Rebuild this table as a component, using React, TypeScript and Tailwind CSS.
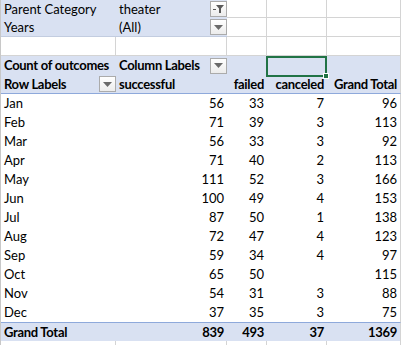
import React from 'react';

// Pivot data rows
const rows = [
  ['Jan', 56, 33, 7, 96],
  ['Feb', 71, 39, 3, 113],
  ['Mar', 56, 33, 3, 92],
  ['Apr', 71, 40, 2, 113],
  ['May', 111, 52, 3, 166],
  ['Jun', 100, 49, 4, 153],
  ['Jul', 87, 50, 1, 138],
  ['Aug', 72, 47, 4, 123],
  ['Sep', 59, 34, 4, 97],
  ['Oct', 65, 50, '', 115],
  ['Nov', 54, 31, 3, 88],
  ['Dec', 37, 35, 3, 75],
];

function DropButton({ filter = false }: { filter?: boolean }) {
  return (
    <div className="w-[17px] h-[16px] shrink-0 border border-[#ababab] bg-gradient-to-b from-white to-[#ececec] flex items-center justify-center">
      {filter ? (
        <svg width="11" height="10" viewBox="0 0 11 10">
          <rect x="0" y="5" width="3" height="1" fill="#5a5a5a" />
          <path d="M3 1h8L8 4.5V9H6V4.5Z" fill="#5a5a5a" />
        </svg>
      ) : (
        <svg width="9" height="5" viewBox="0 0 9 5">
          <path d="M0 0h9L4.5 5Z" fill="#6a6a6a" />
        </svg>
      )}
    </div>
  );
}

const grid = 'border-r border-b border-[#d4d4d4]';
const bold = 'font-bold tracking-[-0.3px]';

export default function App() {
  return (
    <div className="w-[403px] h-[345px] overflow-hidden bg-white text-black font-[Lato,sans-serif] text-[13px] leading-none whitespace-nowrap border-l border-[#c8c8c8]">
      <div className="grid grid-cols-[115px_111px_40px_60px_74px]">
        {/* Row 1: report filter */}
        <div className="h-[18px] bg-[#d9e1f2] flex items-center pl-[3px]">Parent Category</div>
        <div className="h-[18px] bg-[#d9e1f2] flex items-center justify-between pl-[3px]">
          <span>theater</span>
          <DropButton filter />
        </div>
        <div className={`h-[18px] ${grid}`} />
        <div className={`h-[18px] ${grid}`} />
        <div className={`h-[18px] ${grid}`} />

        {/* Row 2 */}
        <div className="h-[19px] bg-[#d9e1f2] border-b border-[#c3cde0] flex items-center pl-[3px]">Years</div>
        <div className="h-[19px] bg-[#d9e1f2] border-b border-[#c3cde0] flex items-center justify-between pl-[3px]">
          <span>(All)</span>
          <DropButton />
        </div>
        <div className={`h-[19px] ${grid}`} />
        <div className={`h-[19px] ${grid}`} />
        <div className={`h-[19px] ${grid}`} />

        {/* Row 3: blank */}
        <div className={`h-[19px] ${grid}`} />
        <div className={`h-[19px] ${grid}`} />
        <div className={`h-[19px] ${grid}`} />
        <div className={`h-[19px] ${grid}`} />
        <div className={`h-[19px] ${grid}`} />

        {/* Row 4: header */}
        <div className={`h-[19px] bg-[#d9e1f2] flex items-center pl-[3px] ${bold}`}>Count of outcomes</div>
        <div className={`h-[19px] bg-[#d9e1f2] flex items-center justify-between pl-[3px] ${bold}`}>
          <span>Column Labels</span>
          <DropButton />
        </div>
        <div className="h-[19px] bg-[#d9e1f2]" />
        <div className="h-[19px] bg-[#d9e1f2] relative">
          <div className="absolute -left-px top-0 w-[61px] h-[21px] border-2 border-[#217346]" />
          <div className="absolute -right-[2px] -bottom-[4px] w-[6px] h-[6px] bg-[#217346] border border-white" />
        </div>
        <div className="h-[19px] bg-[#d9e1f2] border-r border-[#d4d4d4]" />

        {/* Row 5: row labels */}
        <div className={`h-[19px] bg-[#d9e1f2] border-b border-[#8ea9db] flex items-center justify-between pl-[3px] ${bold}`}>
          <span>Row Labels</span>
          <DropButton />
        </div>
        <div className={`h-[19px] bg-[#d9e1f2] border-b border-[#8ea9db] flex items-center pl-[3px] ${bold}`}>successful</div>
        <div className={`h-[19px] bg-[#d9e1f2] border-b border-[#8ea9db] flex items-center justify-end pr-[3px] ${bold}`}>failed</div>
        <div className={`h-[19px] bg-[#d9e1f2] border-b border-[#8ea9db] flex items-center justify-end pr-[3px] ${bold}`}>canceled</div>
        <div className={`h-[19px] bg-[#d9e1f2] border-b border-r border-[#8ea9db] border-r-[#d4d4d4] flex items-center justify-end pr-[3px] ${bold}`}>Grand Total</div>

        {/* Data rows */}
        {rows.map((r) => (
          <React.Fragment key={r[0]}>
            <div className="h-[19px] flex items-center pl-[3px]">{r[0]}</div>
            <div className="h-[19px] flex items-center justify-end pr-[3px]">{r[1]}</div>
            <div className="h-[19px] flex items-center justify-end pr-[3px]">{r[2]}</div>
            <div className="h-[19px] flex items-center justify-end pr-[3px]">{r[3]}</div>
            <div className="h-[19px] flex items-center justify-end pr-[3px] border-r border-[#d4d4d4]">{r[4]}</div>
          </React.Fragment>
        ))}

        {/* Grand total */}
        <div className={`h-[19px] bg-[#d9e1f2] border-t border-[#8ea9db] flex items-center pl-[3px] ${bold}`}>Grand Total</div>
        <div className={`h-[19px] bg-[#d9e1f2] border-t border-[#8ea9db] flex items-center justify-end pr-[3px] ${bold}`}>839</div>
        <div className={`h-[19px] bg-[#d9e1f2] border-t border-[#8ea9db] flex items-center justify-end pr-[3px] ${bold}`}>493</div>
        <div className={`h-[19px] bg-[#d9e1f2] border-t border-[#8ea9db] flex items-center justify-end pr-[3px] ${bold}`}>37</div>
        <div className={`h-[19px] bg-[#d9e1f2] border-t border-r border-[#8ea9db] border-r-[#d4d4d4] flex items-center justify-end pr-[3px] ${bold}`}>1369</div>

        {/* Trailing empty row */}
        <div className={`h-[19px] ${grid}`} />
        <div className={`h-[19px] ${grid}`} />
        <div className={`h-[19px] ${grid}`} />
        <div className={`h-[19px] ${grid}`} />
        <div className={`h-[19px] ${grid}`} />
      </div>
    </div>
  );
}
